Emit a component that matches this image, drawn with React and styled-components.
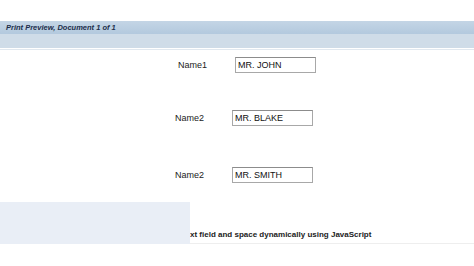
import React from "react";
import styled, { createGlobalStyle } from "styled-components";

const Global = createGlobalStyle`
  html, body { margin: 0; padding: 0; background: #ffffff; }
  body { font-family: "Liberation Sans", Arial, sans-serif; width: 474px; height: 266px; overflow: hidden; }
`;

const Page = styled.div`
  width: 474px;
  height: 266px;
  display: flex;
  flex-direction: column;
  padding-top: 21px;
  box-sizing: border-box;
`;

const Header = styled.div`
  display: flex;
  flex-direction: column;
  border-bottom: 1px solid #e1e8ef;
`;

const TitleBar = styled.div`
  height: 13px;
  background: linear-gradient(#c4d5e5, #b3c9de);
  display: flex;
  align-items: center;
  padding-left: 6px;
  font-size: 7.5px;
  font-weight: bold;
  font-style: italic;
  color: #1c2d4a;
  font-family: "Liberation Sans", Arial, sans-serif;
`;

const SubBar = styled.div`
  height: 14px;
  background: #cfdce8;
  border-bottom: 1px solid #ffffff;
`;

const Form = styled.div`
  display: flex;
  flex-direction: column;
`;

const Row = styled.div`
  display: flex;
  align-items: center;
  margin-top: ${(p) => p.$top}px;
  padding-left: ${(p) => p.$left}px;
`;

const Label = styled.div`
  width: 57px;
  font-size: 9px;
  color: #222;
`;

const Field = styled.div`
  width: 77px;
  height: 14px;
  border: 1px solid #a8a8a8;
  border-top-color: #8c8c8c;
  box-sizing: content-box;
  font-size: 9px;
  color: #111;
  display: flex;
  align-items: center;
  padding-left: 2px;
`;

const Footer = styled.div`
  display: flex;
  align-items: flex-end;
  margin-top: 19px;
`;

const Shade = styled.div`
  width: 190px;
  height: 42px;
  background: #e9eef6;
  flex: none;
`;

const Caption = styled.div`
  flex: 1;
  font-size: 8px;
  font-weight: bold;
  color: #222;
  padding-bottom: 4px;
  border-bottom: 1px solid #eeeeee;
  white-space: nowrap;
  overflow: hidden;
`;

const rows = [
  { label: "Name1", value: "MR. JOHN", top: 7, left: 178 },
  { label: "Name2", value: "MR. BLAKE", top: 37, left: 175 },
  { label: "Name2", value: "MR. SMITH", top: 41, left: 175 },
];

export default function App() {
  return (
    <>
      <Global />
      <Page>
        <Header>
          <TitleBar>Print Preview, Document 1 of 1</TitleBar>
          <SubBar />
        </Header>
        <Form>
          {rows.map((r, i) => (
            <Row key={i} $top={r.top} $left={r.left}>
              <Label>{r.label}</Label>
              <Field>{r.value}</Field>
            </Row>
          ))}
        </Form>
        <Footer>
          <Shade />
          <Caption>xt field and space dynamically using JavaScript</Caption>
        </Footer>
      </Page>
    </>
  );
}
